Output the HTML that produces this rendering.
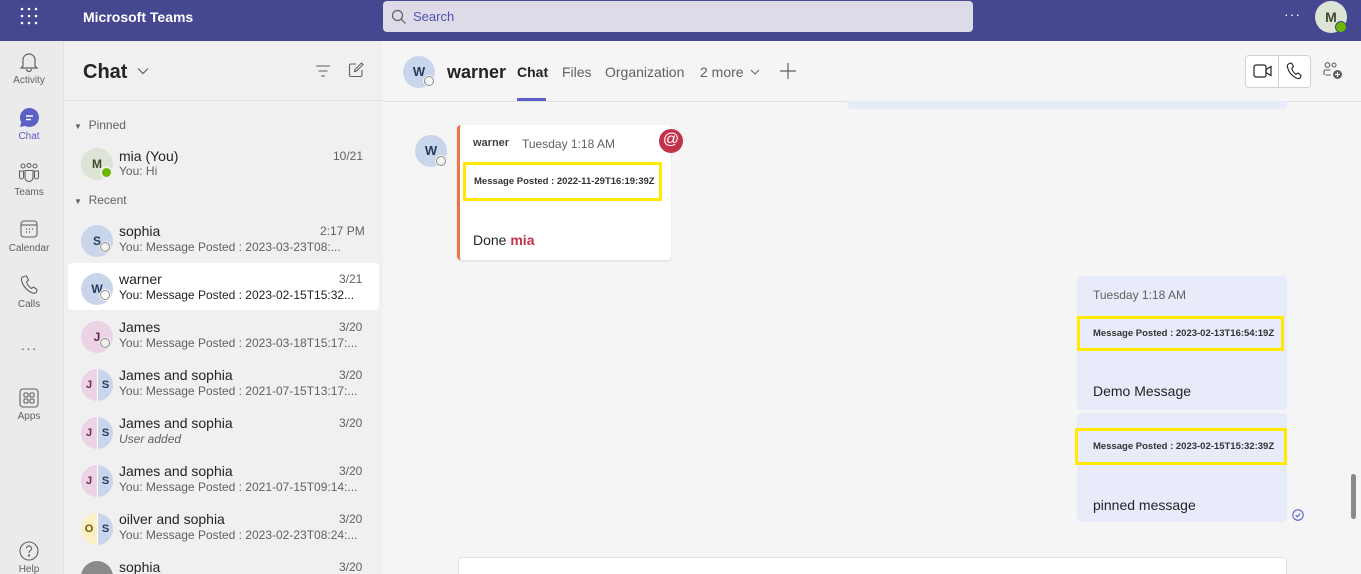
<!DOCTYPE html>
<html style="width:1361px;height:574px;overflow:hidden"><head><meta charset="utf-8"><style>
*{margin:0;padding:0;box-sizing:border-box}
body{width:1361px;height:574px;overflow:hidden;position:relative;background:#f5f5f5;font-family:"Liberation Sans",sans-serif;color:#242424}
.a{position:absolute}
.top{left:0;top:0;width:1361px;height:41px;background:#464791}
.rail{left:0;top:41px;width:63px;height:533px;background:#ebebeb}
.list{left:63px;top:41px;width:320px;height:533px;background:#f0f0f0;border-left:1px solid #e0e0e0}
.ri{position:absolute;left:0;width:58px;text-align:center;font-size:10px;color:#616161}
.av{position:absolute;width:32px;height:32px;border-radius:50%;font-size:12px;font-weight:bold;color:#243a5e;text-align:center;line-height:32px;overflow:hidden}
.st{position:absolute;width:12px;height:12px;border-radius:50%;background:#f0f0f0;border:1px solid #f0f0f0}
.st::after{content:"";position:absolute;left:0;top:0;width:8px;height:8px;border:1px solid #8a8a8a;border-radius:50%}
.nm{position:absolute;left:119px;font-size:14px;color:#242424;white-space:nowrap}
.sb{position:absolute;left:119px;font-size:12px;color:#616161;white-space:nowrap}
.dt{position:absolute;font-size:12px;color:#616161;white-space:nowrap}
.split{display:flex}
.split span{width:16px;height:32px;line-height:32px;font-size:11px}
.yb{position:absolute;border:3px solid #ffea00;font-size:9.5px;font-weight:bold;color:#333;padding-left:11px;line-height:30px;white-space:nowrap}
</style></head><body>
<div class="a top"></div>
<svg class="a" style="left:19px;top:6px" width="20" height="20" viewBox="0 0 20 20" fill="#fff"><g><circle cx="3" cy="3" r="1.3"/><circle cx="10" cy="3" r="1.3"/><circle cx="17" cy="3" r="1.3"/><circle cx="3" cy="10" r="1.3"/><circle cx="10" cy="10" r="1.3"/><circle cx="17" cy="10" r="1.3"/><circle cx="3" cy="17" r="1.3"/><circle cx="10" cy="17" r="1.3"/><circle cx="17" cy="17" r="1.3"/></g></svg>
<div class="a" style="left:83px;top:9px;color:#fff;font-weight:bold;font-size:14px">Microsoft Teams</div>
<div class="a" style="left:383px;top:1px;width:590px;height:31px;background:#dcdbe7;border-radius:4px"></div>
<svg class="a" style="left:391px;top:9px" width="16" height="16" viewBox="0 0 16 16" fill="none" stroke="#616161" stroke-width="1.2"><circle cx="6.5" cy="6.5" r="5"/><path d="M10 10l4.5 4.5"/></svg>
<div class="a" style="left:413px;top:9px;font-size:13px;color:#4f52b2">Search</div>
<div class="a" style="left:1284px;top:6px;color:#fff;font-size:14px;letter-spacing:1px">···</div>
<div class="a" style="left:1315px;top:1px;width:32px;height:32px;border-radius:50%;background:#dce4d6;color:#3a4a2a;font-size:14px;font-weight:bold;text-align:center;line-height:32px">M</div>
<div class="a" style="left:1335px;top:21px;width:12px;height:12px;border-radius:50%;background:#6bb700;border:1.5px solid #464791"></div>

<div class="a rail"></div>
<svg class="a" style="left:19px;top:51px" width="20" height="22" viewBox="0 0 20 22" fill="none" stroke="#616161" stroke-width="1.2"><path d="M4 15V9a6 6 0 0 1 12 0v6l2 2H2z"/><path d="M7.5 18a2.5 2.5 0 0 0 5 0"/></svg>
<div class="ri" style="top:75px">Activity</div>
<svg class="a" style="left:19px;top:107px" width="21" height="21" viewBox="0 0 21 21"><path d="M10.5 1a9.5 9.5 0 1 1-4.5 17.9L1 20l1.3-4.7A9.5 9.5 0 0 1 10.5 1z" fill="#5b5fc7"/><path d="M7 9h7M7 12.5h5" stroke="#fff" stroke-width="1.4"/></svg>
<div class="ri" style="top:131px;color:#5b5fc7">Chat</div>
<svg class="a" style="left:18px;top:163px" width="22" height="20" viewBox="0 0 22 20" fill="none" stroke="#616161" stroke-width="1.1"><circle cx="5" cy="3" r="2"/><circle cx="11" cy="2.5" r="2"/><circle cx="17" cy="3" r="2"/><path d="M1.5 8h4v6a2 2 0 0 1-4 0zM16.5 8h4v6a2 2 0 0 1-4 0zM7 7.5h8v7a4 4 0 0 1-8 0z"/></svg>
<div class="ri" style="top:187px">Teams</div>
<svg class="a" style="left:20px;top:220px" width="18" height="18" viewBox="0 0 18 18" fill="none" stroke="#616161" stroke-width="1.1"><rect x="1" y="1" width="16" height="16" rx="3"/><path d="M1 5h16"/><path d="M6 9h1M9 9h1M12 9h1M6 12h1M9 12h1" stroke-width="1.5"/></svg>
<div class="ri" style="top:243px">Calendar</div>
<svg class="a" style="left:20px;top:275px" width="18" height="20" viewBox="0 0 18 20" fill="none" stroke="#616161" stroke-width="1.1"><path d="M4 1.5l2.5-.5 2 4-2 2c.8 2.5 2.5 5 5 6.5l2-1.5 3.5 2.5-.5 2.5c-1 1.5-3 1.5-5 .5C6 15 2.5 10 1.5 5.5 1 3.5 2 2 4 1.5z"/></svg>
<div class="ri" style="top:299px">Calls</div>
<div class="ri" style="top:340px;font-size:14px;letter-spacing:1px">···</div>
<svg class="a" style="left:19px;top:388px" width="20" height="20" viewBox="0 0 20 20" fill="none" stroke="#616161" stroke-width="1.1"><rect x="1" y="1" width="18" height="18" rx="3"/><rect x="5" y="5" width="4" height="4" rx="1"/><rect x="11" y="5" width="4" height="4" rx="1"/><rect x="5" y="11" width="4" height="4" rx="1"/><rect x="11" y="11" width="4" height="4" rx="1"/></svg>
<div class="ri" style="top:411px">Apps</div>
<svg class="a" style="left:19px;top:541px" width="20" height="20" viewBox="0 0 20 20" fill="none" stroke="#616161" stroke-width="1.1"><circle cx="10" cy="10" r="9"/><path d="M7.5 7.5a2.5 2.5 0 1 1 3.5 2.3c-.7.4-1 .8-1 1.7v.5"/><circle cx="10" cy="14.5" r=".6" fill="#616161"/></svg>
<div class="ri" style="top:564px">Help</div>

<div class="a list">
 <div class="a" style="left:19px;top:20px;font-size:20px;font-weight:bold">Chat</div>
 <svg class="a" style="left:73px;top:26px" width="12" height="8" viewBox="0 0 12 8" fill="none" stroke="#616161" stroke-width="1.2"><path d="M1 1.5l5 5 5-5"/></svg>
 <svg class="a" style="left:252px;top:24px" width="14" height="12" viewBox="0 0 14 12" stroke="#616161" stroke-width="1.1"><path d="M0 1h14M2.5 6h9M5 11h4"/></svg>
 <svg class="a" style="left:284px;top:21px" width="16" height="16" viewBox="0 0 16 16" fill="none" stroke="#616161" stroke-width="1.1"><path d="M8 2H3a1.5 1.5 0 0 0-1.5 1.5v9.5A1.5 1.5 0 0 0 3 14.5h9.5A1.5 1.5 0 0 0 14 13V8"/><path d="M6.5 9.5l.5-2L13.5 1l1.5 1.5-6.5 6.5z"/></svg>
 <div class="a" style="left:0;top:59px;width:319px;height:1px;background:#e0e0e0"></div>
 <div class="a" style="left:10px;top:77px;font-size:12px;color:#616161"><span style="font-size:8px">▼</span>&nbsp; Pinned</div>
 <div class="a" style="left:10px;top:152px;font-size:12px;color:#616161"><span style="font-size:8px">▼</span>&nbsp; Recent</div>
 <div class="a" style="left:4px;top:222px;width:311px;height:47px;background:#fff;border-radius:4px"></div>
</div>

<div class="a" style="left:0;top:0;width:1361px;height:574px;overflow:hidden">
 <div class="av" style="left:81px;top:148px;background:#dce4d6;color:#3a4a2a">M</div>
 <div class="a" style="left:100px;top:166px;width:13px;height:13px;border-radius:50%;background:#6bb700;border:2px solid #f0f0f0"></div>
 <div class="nm" style="top:148px">mia (You)</div><div class="sb" style="top:164px">You: Hi</div><div class="dt" style="top:149px;left:333px">10/21</div>

 <div class="av" style="left:81px;top:225px;background:#c9d5ea">S</div><div class="st" style="left:99px;top:241px"></div>
 <div class="nm" style="top:223px">sophia</div><div class="sb" style="top:240px">You: Message Posted : 2023-03-23T08:...</div><div class="dt" style="top:224px;left:320px">2:17 PM</div>

 <div class="av" style="left:81px;top:273px;background:#c9d5ea">W</div><div class="st" style="left:99px;top:289px;background:#fff;border-color:#fff"></div>
 <div class="nm" style="top:271px">warner</div><div class="sb" style="top:288px;color:#242424">You: Message Posted : 2023-02-15T15:32...</div><div class="dt" style="top:272px;left:339px">3/21</div>

 <div class="av" style="left:81px;top:321px;background:#ecd3e3;color:#6b2553">J</div><div class="st" style="left:99px;top:337px"></div>
 <div class="nm" style="top:319px">James</div><div class="sb" style="top:336px">You: Message Posted : 2023-03-18T15:17:...</div><div class="dt" style="top:320px;left:339px">3/20</div>

 <div class="av split" style="left:81px;top:369px"><span style="background:#ecd3e3;color:#6b2553">J</span><span style="background:#c9d5ea;border-left:1px solid #fff">S</span></div>
 <div class="nm" style="top:367px">James and sophia</div><div class="sb" style="top:384px">You: Message Posted : 2021-07-15T13:17:...</div><div class="dt" style="top:368px;left:339px">3/20</div>

 <div class="av split" style="left:81px;top:417px"><span style="background:#ecd3e3;color:#6b2553">J</span><span style="background:#c9d5ea;border-left:1px solid #fff">S</span></div>
 <div class="nm" style="top:415px">James and sophia</div><div class="sb" style="top:432px;font-style:italic">User added</div><div class="dt" style="top:416px;left:339px">3/20</div>

 <div class="av split" style="left:81px;top:465px"><span style="background:#ecd3e3;color:#6b2553">J</span><span style="background:#c9d5ea;border-left:1px solid #fff">S</span></div>
 <div class="nm" style="top:463px">James and sophia</div><div class="sb" style="top:480px">You: Message Posted : 2021-07-15T09:14:...</div><div class="dt" style="top:464px;left:339px">3/20</div>

 <div class="av split" style="left:81px;top:513px"><span style="background:#fbefc6;color:#6d5700">O</span><span style="background:#c9d5ea;border-left:1px solid #fff">S</span></div>
 <div class="nm" style="top:511px">oilver and sophia</div><div class="sb" style="top:528px">You: Message Posted : 2023-02-23T08:24:...</div><div class="dt" style="top:512px;left:339px">3/20</div>

 <div class="av" style="left:81px;top:561px;background:#8a8a8a"></div>
 <div class="nm" style="top:559px">sophia</div><div class="dt" style="top:560px;left:339px">3/20</div>

 <div class="a" style="left:458px;top:557px;width:829px;height:30px;background:#fff;border:1px solid #e0e0e0;border-radius:4px"></div>
</div>

<div class="a" style="left:383px;top:101px;width:978px;height:1px;background:#e0e0e0"></div>
<div class="av" style="left:403px;top:56px;background:#c9d5ea;font-size:13px">W</div>
<div class="st" style="left:423px;top:75px;background:#f5f5f5;border-color:#f5f5f5"></div>
<div class="a" style="left:447px;top:62px;font-size:18px;font-weight:bold">warner</div>
<div class="a" style="left:517px;top:64px;font-size:14px;font-weight:bold;color:#242424">Chat</div>
<div class="a" style="left:517px;top:98px;width:29px;height:3px;background:#5b5fc7"></div>
<div class="a" style="left:562px;top:64px;font-size:14px;color:#616161">Files</div>
<div class="a" style="left:605px;top:64px;font-size:14px;color:#616161">Organization</div>
<div class="a" style="left:700px;top:64px;font-size:14px;color:#616161">2 more</div>
<svg class="a" style="left:750px;top:69px" width="10" height="6" viewBox="0 0 10 6" fill="none" stroke="#616161"><path d="M1 1l4 4 4-4"/></svg>
<svg class="a" style="left:780px;top:63px" width="16" height="16" viewBox="0 0 16 16" stroke="#616161" stroke-width="1.2"><path d="M8 0v16M0 8h16"/></svg>
<div class="a" style="left:1245px;top:55px;width:66px;height:33px;background:#fff;border:1px solid #d1d1d1;border-radius:4px"></div>
<div class="a" style="left:1278px;top:56px;width:1px;height:31px;background:#d1d1d1"></div>
<svg class="a" style="left:1253px;top:64px" width="19" height="14" viewBox="0 0 19 14" fill="none" stroke="#242424" stroke-width="1.2"><rect x="1" y="1" width="12" height="12" rx="2"/><path d="M13 5.5l5-3v9l-5-3z"/></svg>
<svg class="a" style="left:1286px;top:62px" width="16" height="18" viewBox="0 0 16 18" fill="none" stroke="#242424" stroke-width="1.1"><path d="M3.5 1.5l2-.5 2 3.5-1.8 2c.7 2.2 2.2 4.5 4.3 5.8l2-1.3 3 2.3-.5 2.2c-1 1.3-2.7 1.3-4.5.4C5.5 13.5 2.5 9.3 1.5 5.2 1 3.3 2 2 3.5 1.5z"/></svg>
<svg class="a" style="left:1323px;top:62px" width="20" height="18" viewBox="0 0 20 18" fill="none" stroke="#616161" stroke-width="1.1"><circle cx="4.5" cy="3" r="2.3"/><circle cx="11" cy="3" r="2"/><path d="M1 13V9.5A1.5 1.5 0 0 1 2.5 8h5M8 13H2.5"/><circle cx="14.5" cy="12.5" r="4.5" fill="#616161" stroke="none"/><path d="M14.5 10v5M12 12.5h5" stroke="#fff"/></svg>

<div class="a" style="left:847px;top:101px;width:440px;height:8px;background:#e8ebfa;border-radius:0 0 4px 4px"></div>

<div class="av" style="left:415px;top:135px;background:#c9d5ea;font-size:13px">W</div>
<div class="st" style="left:435px;top:155px;background:#f5f5f5;border-color:#f5f5f5"></div>
<div class="a" style="left:457px;top:125px;width:214px;height:135px;background:#fff;border-left:3px solid #e97548;border-radius:4px;box-shadow:0 1px 2px rgba(0,0,0,.1)"></div>
<div class="a" style="left:473px;top:137px;font-size:11px;font-weight:bold;color:#424242">warner</div>
<div class="a" style="left:522px;top:137px;font-size:12px;color:#616161">Tuesday 1:18 AM</div>
<div class="a" style="left:659px;top:129px;width:24px;height:24px;border-radius:50%;background:#c4314b;color:#fff;text-align:center;line-height:22px;font-size:16px">@</div>
<div class="yb" style="left:463px;top:162px;width:199px;height:39px;padding-left:8px;line-height:33px">Message Posted : 2022-11-29T16:19:39Z</div>
<div class="a" style="left:473px;top:232px;font-size:14px">Done <b style="color:#c4314b">mia</b></div>

<div class="a" style="left:1077px;top:276px;width:210px;height:134px;background:#e8ebfa;border-radius:4px"></div>
<div class="a" style="left:1093px;top:288px;font-size:12px;color:#616161">Tuesday 1:18 AM</div>
<div class="yb" style="left:1077px;top:316px;width:207px;height:35px;padding-left:13px;line-height:29px">Message Posted : 2023-02-13T16:54:19Z</div>
<div class="a" style="left:1093px;top:383px;font-size:14px">Demo Message</div>
<div class="a" style="left:1077px;top:413px;width:210px;height:109px;background:#e8ebfa;border-radius:4px"></div>
<div class="yb" style="left:1075px;top:428px;width:212px;height:37px;padding-left:15px;line-height:31px">Message Posted : 2023-02-15T15:32:39Z</div>
<div class="a" style="left:1093px;top:497px;font-size:14px">pinned message</div>
<svg class="a" style="left:1292px;top:509px" width="12" height="12" viewBox="0 0 12 12" fill="none" stroke="#5b5fc7" stroke-width="1.1"><circle cx="6" cy="6" r="5.2"/><path d="M3.7 6.2l1.6 1.6 3-3.2"/></svg>
<div class="a" style="left:1351px;top:474px;width:5px;height:45px;background:#8a8a8a;border-radius:3px"></div>
</body></html>
